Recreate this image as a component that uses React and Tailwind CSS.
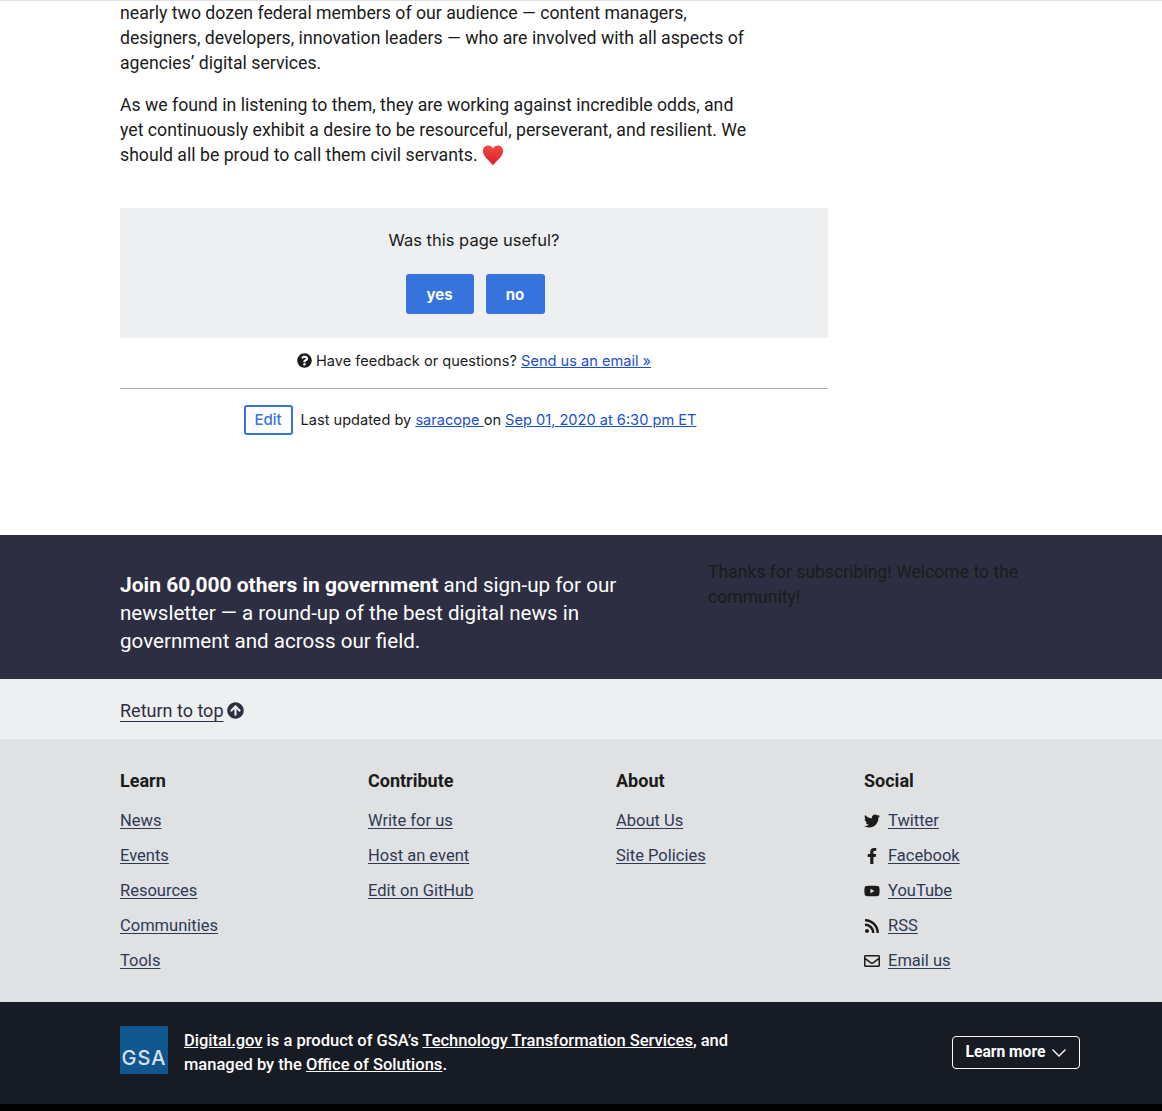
import React from "react";
import { FaTwitter, FaFacebookF, FaYoutube, FaRss, FaRegEnvelope, FaQuestionCircle, FaArrowCircleUp } from "react-icons/fa";

const learn = ["News", "Events", "Resources", "Communities", "Tools"];
const contribute = ["Write for us", "Host an event", "Edit on GitHub"];
const about = ["About Us", "Site Policies"];
const social = [
  { label: "Twitter", Icon: FaTwitter },
  { label: "Facebook", Icon: FaFacebookF },
  { label: "YouTube", Icon: FaYoutube },
  { label: "RSS", Icon: FaRss },
  { label: "Email us", Icon: FaRegEnvelope },
];

const LinkColumn = ({ title, links }) => (
  <div>
    <h3 className="text-[18px] leading-[25px] font-bold text-[#1b1b1b]">{title}</h3>
    <ul className="mt-[15px] flex flex-col gap-[10px]">
      {links.map((link) => (
        <li key={link} className="h-[25px] text-[16.5px] leading-[25px] text-[#2e3a55] underline underline-offset-2">
          {link}
        </li>
      ))}
    </ul>
  </div>
);

const App = () => {
  return (
    <div className="min-h-[1111px] bg-black font-['Inter',sans-serif] text-[#1b1b1b]">
      <main className="h-[535px] border-t border-[#dfe1e2] bg-white pl-[120px]">
        <div className="w-[635px] font-['Roboto',sans-serif] text-[17.7px] leading-[25px]">
          <p>
            nearly two dozen federal members of our audience — content managers, designers, developers, innovation
            leaders — who are involved with all aspects of agencies’ digital services.
          </p>
          <p className="mt-[17px]">
            As we found in listening to them, they are working against incredible odds, and yet continuously exhibit a
            desire to be resourceful, perseverant, and resilient. We should all be proud to call them civil servants.{" "}
            <svg viewBox="0 0 24 24" className="inline-block h-[22px] w-[22px] align-[-5px]">
              <defs>
                <linearGradient id="heart" x1="0" y1="0" x2="0" y2="1">
                  <stop offset="0" stopColor="#ef4a42" />
                  <stop offset="1" stopColor="#d8202a" />
                </linearGradient>
              </defs>
              <path
                fill="url(#heart)"
                d="M12 23.5C9.5 19 1 14 1 7.5 1 3.8 3.7 1.5 6.6 1.5c2.3 0 4.2 1.3 5.4 3.5 1.2-2.2 3.1-3.5 5.4-3.5C20.3 1.5 23 3.8 23 7.5 23 14 14.5 19 12 23.5z"
              />
            </svg>
          </p>
        </div>

        <section className="mt-[40px] h-[130px] w-[708px] bg-[#edeff0] pt-[20px] text-center">
          <p className="text-[16.5px] leading-[25px]">Was this page useful?</p>
          <div className="mt-[21px] flex justify-center gap-[12px] pl-[2px]">
            <button className="h-[40px] w-[68px] rounded-[3px] bg-[#3673dd] pt-[3px] text-[15px] font-bold text-white">yes</button>
            <button className="h-[40px] w-[59px] rounded-[3px] bg-[#3673dd] pt-[3px] text-[15px] font-bold text-white">no</button>
          </div>
        </section>

        <div className="h-[51px] w-[708px] border-b border-[#a9aeb1] pt-[11px] text-center text-[14.6px] leading-[25px]">
          <FaQuestionCircle className="mr-[4px] inline-block text-[15px] align-[-2px]" />
          Have feedback or questions? <a className="text-[#1a4fd0] underline">Send us an email »</a>
        </div>

        <div className="mt-[16px] flex w-[700px] items-center justify-center text-[14.6px]">
          <button className="h-[30px] w-[49px] rounded-[3px] border-2 border-[#3673dd] text-[15px] font-medium text-[#3673dd]">
            Edit
          </button>
          <span className="ml-[8px] pt-[2px]">
            Last updated by <a className="text-[#1a4fd0] underline">saracope </a>on{" "}
            <a className="text-[#1a4fd0] underline">Sep 01, 2020 at 6:30 pm ET</a>
          </span>
        </div>
      </main>

      <section className="flex h-[144px] bg-[#2d2e42] pl-[120px]">
        <p className="w-[510px] pt-[36px] font-['Roboto',sans-serif] text-[20.6px] leading-[28px] text-white">
          <strong className="text-[21px] font-bold">Join 60,000 others in government</strong> and sign-up for our
          newsletter — a round-up of the best digital news in government and across our field.
        </p>
        <p className="ml-[78px] w-[340px] pt-[25px] font-['Roboto',sans-serif] text-[17.6px] leading-[25px] text-[#1b1b1b]">
          Thanks for subscribing! Welcome to the community!
        </p>
      </section>

      <div className="flex h-[60px] items-center bg-[#edeff0] pl-[120px] pt-[3px] text-[#2d2e42]">
        <a className="font-['Roboto',sans-serif] text-[18px] underline underline-offset-4">Return to top</a>
        <FaArrowCircleUp className="ml-[4px] text-[17px]" />
      </div>

      <footer className="h-[263px] bg-[#dfe1e2] pl-[120px] pr-[82px] pt-[29px] font-['Roboto',sans-serif]">
        <div className="grid grid-cols-4 gap-[32px]">
          <LinkColumn title="Learn" links={learn} />
          <LinkColumn title="Contribute" links={contribute} />
          <LinkColumn title="About" links={about} />
          <div>
            <h3 className="text-[18px] leading-[25px] font-bold text-[#1b1b1b]">Social</h3>
            <ul className="mt-[15px] flex flex-col gap-[10px]">
              {social.map(({ label, Icon }) => (
                <li key={label} className="flex h-[25px] items-center">
                  <span className="flex w-[24px] shrink-0 items-center text-[16px] text-[#1b1b1b]">
                    <Icon />
                  </span>
                  <span className="text-[16.5px] leading-[25px] text-[#2e3a55] underline underline-offset-2">{label}</span>
                </li>
              ))}
            </ul>
          </div>
        </div>
      </footer>

      <div className="flex h-[102px] items-start bg-[#171b24] pl-[120px] pr-[82px] pt-[24px] text-white">
        <div className="flex h-[48px] w-[48px] shrink-0 items-end justify-center bg-[#11568f] pb-[4px] text-[20px] font-medium leading-[24px] tracking-[1px] text-[#d8e4ee]">
          GSA
        </div>
        <p className="ml-[16px] mt-[3px] w-[570px] font-['Roboto',sans-serif] text-[16.5px] font-medium leading-[24px]">
          <a className="underline">Digital.gov</a> is a product of GSA’s{" "}
          <a className="underline">Technology Transformation Services</a>, and managed by the{" "}
          <a className="underline">Office of Solutions</a>.
        </p>
        <button className="ml-auto mt-[10px] flex h-[33px] w-[128px] items-center justify-center gap-[7px] rounded-[4px] border border-white font-['Roboto',sans-serif] text-[15.6px] font-bold">
          Learn more
          <svg viewBox="0 0 14 8" className="h-[8px] w-[14px]" fill="none" stroke="currentColor" strokeWidth="1.3">
            <path d="M0.5 0.5 7 7 13.5 0.5" />
          </svg>
        </button>
      </div>
    </div>
  );
};

export default App;
